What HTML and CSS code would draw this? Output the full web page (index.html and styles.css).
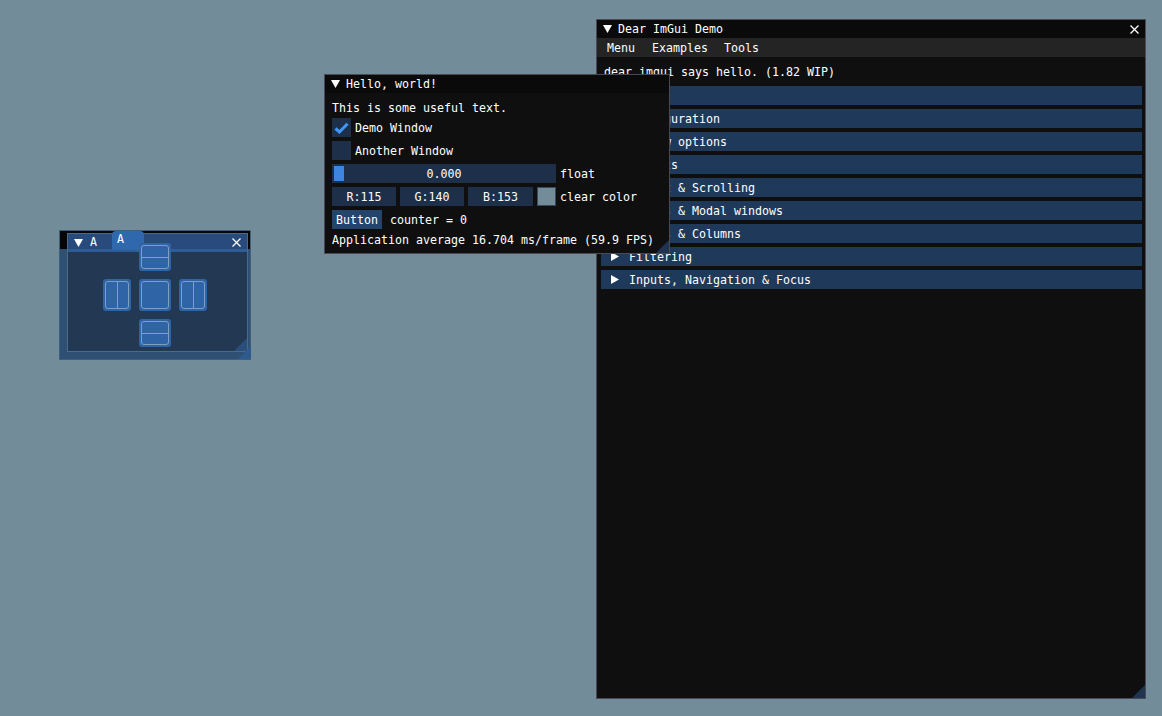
FILE: index.html
```html
<!DOCTYPE html>
<html>

<head>
  <meta charset="utf-8" />
  <title>Dear ImGui Demo</title>
  <link rel="stylesheet" href="styles.css">
</head>

<body>
  <!-- docking preview, window being dragged -->
  <div class="dock_target">
    <div class="dock_target_title"></div>
  </div>
  <div class="window dock_window">
    <div class="title_bar dock_title">
      <svg class="arrow_down" width="9" height="8" viewBox="0 0 9 8"><path d="M0 0H9L4.5 8Z" /></svg>
      <span class="title_text">A</span>
      <svg class="close_x" width="9" height="9" viewBox="0 0 9 9"><path d="M.5 .5L8.5 8.500M8.500 .5L.5 8.500" /></svg>
    </div>
    <div class="dock_tab">A</div>
    <div class="dock_btn dock_top"><i class="split_h"></i></div>
    <div class="dock_btn dock_left"><i class="split_v"></i></div>
    <div class="dock_btn dock_center"><i></i></div>
    <div class="dock_btn dock_right"><i class="split_v"></i></div>
    <div class="dock_btn dock_bottom"><i class="split_h"></i></div>
    <div class="grip grip_dock"></div>
    <div class="grip grip_outer"></div>
  </div>

  <div class="window demo_window">
    <div class="title_bar">
      <svg class="arrow_down" width="9" height="8" viewBox="0 0 9 8"><path d="M0 0H9L4.5 8Z" /></svg>
      <span class="title_text">Dear ImGui Demo</span>
      <svg class="close_x" width="9" height="9" viewBox="0 0 9 9"><path d="M.5 .5L8.500 8.500M8.500 .5L.5 8.500" /></svg>
    </div>
    <div class="menu_bar">
      <span>Menu</span>
      <span>Examples</span>
      <span>Tools</span>
    </div>
    <div class="demo_body">
      <p class="demo_hello">dear imgui says hello. (1.82 WIP)</p>
      <div class="header"><svg class="arrow_right" width="8" height="9" viewBox="0 0 8 9"><path d="M0 0L8 4.500L0 9Z" /></svg><span>Help</span></div>
      <div class="header"><svg class="arrow_right" width="8" height="9" viewBox="0 0 8 9"><path d="M0 0L8 4.500L0 9Z" /></svg><span>Configuration</span></div>
      <div class="header"><svg class="arrow_right" width="8" height="9" viewBox="0 0 8 9"><path d="M0 0L8 4.500L0 9Z" /></svg><span>Window options</span></div>
      <div class="header"><svg class="arrow_right" width="8" height="9" viewBox="0 0 8 9"><path d="M0 0L8 4.500L0 9Z" /></svg><span>Widgets</span></div>
      <div class="header"><svg class="arrow_right" width="8" height="9" viewBox="0 0 8 9"><path d="M0 0L8 4.500L0 9Z" /></svg><span>Layout &amp; Scrolling</span></div>
      <div class="header"><svg class="arrow_right" width="8" height="9" viewBox="0 0 8 9"><path d="M0 0L8 4.500L0 9Z" /></svg><span>Popups &amp; Modal windows</span></div>
      <div class="header"><svg class="arrow_right" width="8" height="9" viewBox="0 0 8 9"><path d="M0 0L8 4.500L0 9Z" /></svg><span>Tables &amp; Columns</span></div>
      <div class="header"><svg class="arrow_right" width="8" height="9" viewBox="0 0 8 9"><path d="M0 0L8 4.500L0 9Z" /></svg><span>Filtering</span></div>
      <div class="header"><svg class="arrow_right" width="8" height="9" viewBox="0 0 8 9"><path d="M0 0L8 4.500L0 9Z" /></svg><span>Inputs, Navigation &amp; Focus</span></div>
    </div>
    <div class="grip"></div>
  </div>

  <div class="window hello_window">
    <div class="title_bar">
      <svg class="arrow_down" width="9" height="8" viewBox="0 0 9 8"><path d="M0 0H9L4.5 8Z" /></svg>
      <span class="title_text">Hello, world!</span>
    </div>
    <div class="hello_body">
      <div class="row"><span>This is some useful text.</span></div>
      <div class="row tall">
        <div class="checkbox"><svg width="19" height="19" viewBox="0 0 19 19"><path d="M3.500 10.500L7.500 14L15.500 5.800" /></svg></div>
        <span>Demo Window</span>
      </div>
      <div class="row tall">
        <div class="checkbox"></div>
        <span>Another Window</span>
      </div>
      <div class="row tall">
        <div class="slider"><div class="slider_grab"></div>0.000</div>
        <span>float</span>
      </div>
      <div class="row tall">
        <div class="field field_r">R:115</div>
        <div class="field field_g">G:140</div>
        <div class="field field_b">B:153</div>
        <div class="swatch"></div>
        <span>clear color</span>
      </div>
      <div class="row tall">
        <div class="button">Button</div>
        <span class="counter">counter = 0</span>
      </div>
      <div class="row"><span>Application average 16.704 ms/frame (59.9 FPS)</span></div>
    </div>
    <div class="grip"></div>
  </div>
</body>

</html>
```

FILE: styles.css
```css
body {
  margin: 0;
  height: 716px;
  overflow: hidden;
  background-color: #728c99;
  color: #fff;
  font-family: "DejaVu Sans Mono", "Liberation Mono", monospace;
  font-size: 11.63px;
  line-height: 13px;
}

p {
  margin: 0;
}

.window {
  position: absolute;
  box-sizing: border-box;
  border: 1px solid #4a4a55;
  background-color: #0f0f0f;
}

.demo_window {
  left: 596px;
  top: 19px;
  width: 550px;
  height: 680px;
}

.hello_window {
  left: 324px;
  top: 74px;
  width: 346px;
  height: 180px;
}

/* title and menu */
.title_bar {
  display: flex;
  align-items: center;
  height: 18px;
  padding: 0 6px 0 6px;
  background-color: #0a0a0a;
}

.title_text {
  margin-left: 6px;
}

.arrow_down {
  fill: #fff;
}

.close_x {
  margin-left: auto;
  fill: none;
  stroke: #fff;
  stroke-width: 1.3;
}

.menu_bar {
  display: flex;
  align-items: center;
  gap: 16px;
  height: 19px;
  padding-left: 10px;
  background-color: #242424;
}

.menu_bar span:first-child {
  margin-right: 1px;
}

/* text sits 1px under the middle of its row */
.menu_bar span,
.header span,
.row span {
  padding-top: 2px;
}

/* demo window */
.demo_body {
  padding: 8px 3px 0 4px;
}

.demo_hello {
  height: 13px;
  margin: 0 0 8px 3px;
  line-height: 15px;
}

.header {
  display: flex;
  align-items: center;
  height: 19px;
  margin-bottom: 4px;
  padding-left: 10px;
  background-color: #1f395a;
}

.header span {
  margin-left: 10px;
}

.arrow_right {
  fill: #fff;
}

/* hello window */
.hello_body {
  padding: 8px 7px 0;
}

.row {
  display: flex;
  align-items: center;
  height: 13px;
  margin-bottom: 4px;
}

.tall {
  height: 19px;
  gap: 4px;
}

.checkbox {
  width: 19px;
  height: 19px;
  background-color: #1d2f49;
}

.checkbox svg {
  display: block;
  fill: none;
  stroke: #4296fa;
  stroke-width: 3;
}

.slider {
  position: relative;
  width: 224px;
  height: 19px;
  line-height: 21px;
  text-align: center;
  background-color: #1d2f49;
}

.slider_grab {
  position: absolute;
  left: 2px;
  top: 2px;
  width: 10px;
  height: 15px;
  background-color: #3d85e0;
}

.field {
  height: 19px;
  line-height: 21px;
  text-align: center;
  background-color: #1d2f49;
}

.field_r,
.field_g {
  width: 64px;
}

.field_b {
  width: 65px;
}

.swatch {
  box-sizing: border-box;
  width: 19px;
  height: 19px;
  border: 1px solid #3a4a5a;
  background-color: #738c99;
}

.button {
  width: 50px;
  height: 19px;
  line-height: 21px;
  text-align: center;
  background-color: #23456d;
}

.counter {
  margin-left: 4px;
}

.grip {
  position: absolute;
  right: 0;
  bottom: 0;
  width: 13px;
  height: 13px;
  background-color: #1f3450;
  clip-path: polygon(100% 0, 100% 100%, 0 100%);
}

/* dragged window and dock preview */
.dock_target {
  position: absolute;
  left: 59px;
  top: 230px;
  box-sizing: border-box;
  width: 192px;
  height: 130px;
  border: 1px solid #3e5f7d;
  background-color: #2f5073;
}

.dock_target_title {
  height: 18px;
  background-color: #060606;
}

.dock_window {
  left: 67px;
  top: 233px;
  width: 181px;
  height: 119px;
  border-color: #4a6a88;
  background-color: #223853;
}

.dock_title {
  box-sizing: border-box;
  height: 18px;
  padding-top: 2px;
  border-bottom: 3px solid #2e5c96;
  background-color: #284a7c;
}

.dock_title .title_text {
  margin-left: 7px;
}

.dock_tab {
  position: absolute;
  left: 44px;
  top: -3px;
  width: 32px;
  height: 19px;
  border-radius: 4px 4px 0 0;
  box-sizing: border-box;
  padding-left: 5px;
  line-height: 16px;
  background-color: #2f68ad;
}

.dock_btn {
  position: absolute;
  box-sizing: border-box;
  width: 32px;
  height: 28px;
  padding: 2px;
  border-radius: 3px;
  background-color: #2f65a6;
}

.dock_btn i {
  display: block;
  box-sizing: border-box;
  position: relative;
  width: 100%;
  height: 100%;
  border: 1px solid #7e9fc4;
  border-radius: 3px;
}

.split_h::after {
  content: "";
  position: absolute;
  left: 0;
  right: 0;
  top: 50%;
  height: 1px;
  background-color: #7e9fc4;
}

.split_v::after {
  content: "";
  position: absolute;
  top: 0;
  bottom: 0;
  left: 50%;
  width: 1px;
  background-color: #7e9fc4;
}

.dock_top {
  left: 71px;
  top: 9px;
}

.dock_center {
  left: 71px;
  top: 45px;
  height: 32px;
}

.dock_bottom {
  left: 71px;
  top: 85px;
}

.dock_left {
  left: 35px;
  top: 45px;
  width: 28px;
  height: 32px;
}

.dock_right {
  left: 111px;
  top: 45px;
  width: 28px;
  height: 32px;
}

.grip_dock {
  background-color: #2b4f7a;
}

.grip_outer {
  right: -4px;
  bottom: -8px;
  background-color: #2e5a8e;
}
```
